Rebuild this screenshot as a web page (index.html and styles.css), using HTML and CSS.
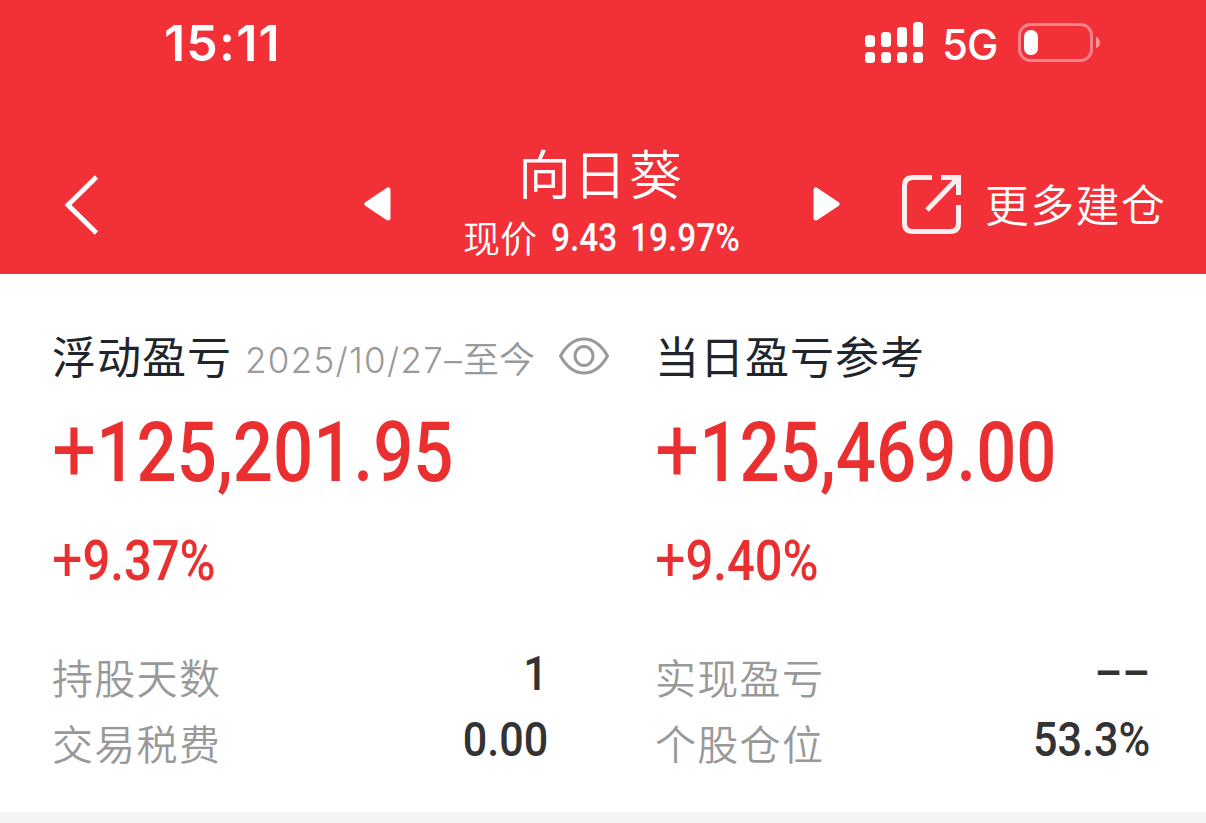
FILE: index.html
```html
<!DOCTYPE html>
<html lang="zh-CN">
<head>
  <meta charset="UTF-8" />
  <title>向日葵</title>
  <link rel="stylesheet" href="styles.css">
</head>
<body>
  <header class="header">
    <div class="status-bar">
      <span class="time">15:11</span>
      <div class="status-icons">
        <svg class="signal" width="58" height="42" viewBox="0 0 58 42" fill="#fff">
          <rect x="0" y="13" width="10" height="12" rx="3.5" />
          <rect x="16" y="10" width="10" height="15" rx="3.5" />
          <rect x="32" y="5" width="10" height="20" rx="3.5" />
          <rect x="48" y="0" width="10" height="25" rx="3.5" />
          <rect x="0" y="30" width="10" height="11" rx="3.5" />
          <rect x="16" y="30" width="10" height="11" rx="3.5" />
          <rect x="32" y="30" width="10" height="11" rx="3.5" />
          <rect x="48" y="30" width="10" height="11" rx="3.5" />
        </svg>
        <span class="network">5G</span>
        <svg class="battery" width="82" height="39" viewBox="0 0 82 39">
          <rect x="1.5" y="1.5" width="72" height="36" rx="11" fill="none" stroke="#fff" stroke-opacity=".4" stroke-width="3" />
          <rect x="6" y="7" width="14" height="25" rx="6.5" fill="#fff" />
          <path d="M78 13.5Q82 16 82 19.5T78 25.5Z" fill="#fff" fill-opacity=".5" />
        </svg>
      </div>
    </div>
    <div class="nav-bar">
      <svg class="back" width="34" height="60" viewBox="0 0 34 60" fill="none" stroke="#fff" stroke-width="4.8">
        <path d="M31.5 2L3 30L31.5 58" />
      </svg>
      <svg class="prev" width="27" height="34" viewBox="0 0 27 34" fill="#fff" stroke="#fff" stroke-width="5" stroke-linejoin="round">
        <path d="M3 17L24 3V31Z" />
      </svg>
      <div class="stock">
        <h1 class="stock-name">向日葵</h1>
        <p class="stock-price">现价<span class="num price">9.43</span><span class="num change">19.97%</span></p>
      </div>
      <svg class="next" width="27" height="34" viewBox="0 0 27 34" fill="#fff" stroke="#fff" stroke-width="5" stroke-linejoin="round">
        <path d="M24 17L3 3V31Z" />
      </svg>
      <svg class="share" width="60" height="60" viewBox="0 0 60 60" fill="none" stroke="#fff" stroke-opacity=".92" stroke-width="5">
        <path d="M30 2.5H11Q2.5 2.5 2.5 11V48Q2.5 56.5 11 56.5H48Q56.5 56.5 56.5 48V30" />
        <path d="M39 2.5H56.5V20M56 3L25 35" />
      </svg>
      <span class="more">更多建仓</span>
    </div>
  </header>

  <main class="summary">
    <section class="panel">
      <div class="panel-title">
        <h2>浮动盈亏</h2>
        <span class="date">2025/10/27<i>–</i><b>至今</b></span>
        <svg class="eye" width="50" height="38" viewBox="0 0 50 38" fill="none" stroke="#999" stroke-width="3">
          <path d="M1.5 19Q11 2 25 2T48.5 19Q39 36 25 36T1.5 19Z" />
          <ellipse cx="25" cy="19" rx="9" ry="9.5" />
        </svg>
      </div>
      <div class="amount"><span class="num"><i class="sign">+</i>125,201.95</span></div>
      <div class="percent"><span class="num"><i class="sign">+</i>9.37%</span></div>
      <dl class="row"><dt>持股天数</dt><dd><span class="num">1</span></dd></dl>
      <dl class="row"><dt>交易税费</dt><dd><span class="num">0.00</span></dd></dl>
    </section>
    <section class="panel">
      <div class="panel-title">
        <h2>当日盈亏参考</h2>
      </div>
      <div class="amount"><span class="num"><i class="sign">+</i>125,469.00</span></div>
      <div class="percent"><span class="num"><i class="sign">+</i>9.40%</span></div>
      <dl class="row"><dt>实现盈亏</dt><dd><span class="num dash">––</span></dd></dl>
      <dl class="row"><dt>个股仓位</dt><dd><span class="num">53.3%</span></dd></dl>
    </section>
  </main>
  <div class="divider"></div>
</body>
</html>
```

FILE: styles.css
```css
* {
  box-sizing: border-box;
  margin: 0;
  padding: 0;
}
body {
  width: 1206px;
  height: 823px;
  overflow: hidden;
  background: #fff;
  font-family: "Noto Sans CJK SC", sans-serif;
  font-weight: 350;
}
svg {
  display: block;
  flex: none;
}
.num {
  display: inline-block;
  font-family: Roboto, sans-serif;
  font-weight: 500;
  white-space: nowrap;
  transform: scaleX(0.88);
  transform-origin: left;
}
.sign {
  font-size: 1.1em;
  font-style: normal;
  font-weight: 400;
  line-height: 0;
}
.header {
  height: 274px;
  background: #f23038;
  color: #fff;
}
.status-bar {
  height: 88px;
  padding: 0 106px 3px 164px;
  display: flex;
  justify-content: space-between;
  align-items: center;
  font-family: Inter, sans-serif;
}
.time {
  padding-top: 1px;
  font-size: 50px;
  font-weight: 600;
  letter-spacing: 1.2px;
}
.status-icons {
  display: flex;
  align-items: center;
}
.signal {
  margin-right: 19px;
}
.network {
  width: 56px;
  margin-right: 20px;
  padding-top: 4px;
  font-size: 42px;
  font-weight: 450;
  letter-spacing: -1px;
}
.nav-bar {
  height: 186px;
  padding: 46px 0 0 65px;
  display: flex;
  align-items: flex-start;
}
.back {
  margin-top: 41px;
}
.prev {
  margin: 53px 0 0 265px;
}
.stock {
  width: 280px;
  margin-left: 72px;
}
.stock-name {
  height: 78px;
  padding-left: 55px;
  font-size: 53px;
  font-weight: 350;
  line-height: 76px;
  letter-spacing: 2.5px;
}
.stock-price {
  height: 50px;
  display: flex;
  font-size: 37px;
  line-height: 50px;
  white-space: nowrap;
}
.stock-price .num {
  padding-top: 1px;
  font-size: 38px;
}
.price {
  margin-left: 14px;
}
.change {
  margin-left: 4px;
}
.next {
  margin: 53px 0 0 70px;
}
.share {
  margin: 41px 0 0 62px;
}
.more {
  margin: 36px 0 0 23px;
  font-size: 44px;
  line-height: 66px;
  letter-spacing: 1.3px;
  white-space: nowrap;
}
.summary {
  height: 538px;
  padding: 47px 56px 0 52px;
  display: flex;
  gap: 107px;
}
.panel {
  width: 496px;
}
.panel-title {
  height: 70px;
  display: flex;
  align-items: center;
}
.panel-title h2 {
  padding-bottom: 3px;
  color: #20252b;
  font-size: 44px;
  font-weight: 400;
  letter-spacing: 1px;
  white-space: nowrap;
}
.date {
  flex: none;
  width: 298px;
  margin-left: 13px;
  padding-top: 2px;
  color: #999;
  font-family: Inter, sans-serif;
  font-size: 35px;
  font-weight: 300;
  letter-spacing: 1.3px;
  white-space: nowrap;
}
.date i {
  font-style: normal;
}
.date b {
  font: 350 36px "Noto Sans CJK SC", sans-serif;
  letter-spacing: 0;
}
.eye {
  margin-left: 16px;
}
.amount {
  height: 121px;
  color: #ea2f31;
  font-size: 83px;
  line-height: 108px;
}
.amount .num {
  transform: scaleX(0.853);
}
.percent {
  height: 131px;
  color: #ea2f31;
  font-size: 55px;
  line-height: 88px;
}
.percent .num {
  transform: scaleX(0.89);
}
.row {
  height: 66px;
  display: flex;
  justify-content: space-between;
  line-height: 66px;
}
.row dt {
  color: #999;
  font-size: 41px;
  letter-spacing: 1.3px;
}
.row dd {
  color: #333;
  font-size: 49px;
  line-height: 52px;
}
.row .num {
  transform: scaleX(0.88);
  transform-origin: right;
}
.divider {
  height: 11px;
  background: #f4f4f4;
}
```
